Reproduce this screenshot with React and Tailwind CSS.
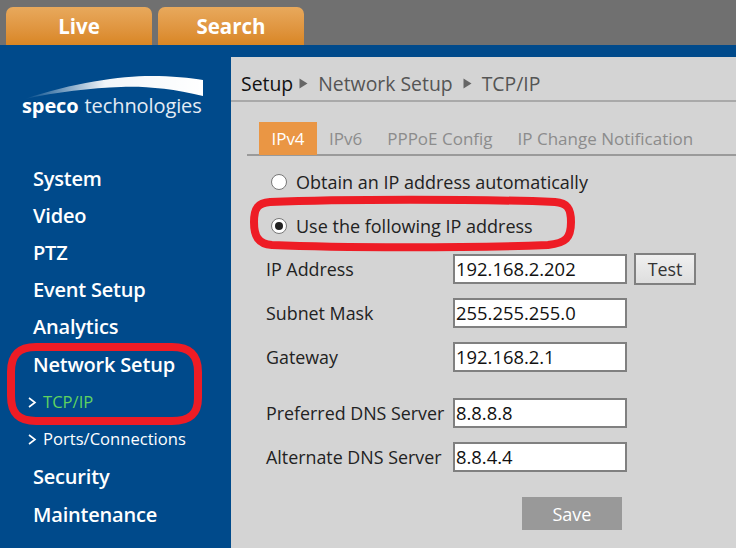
const FONT = { fontFamily: '"Open Sans","Noto Sans",sans-serif' };

const navTop = ["System", "Video", "PTZ", "Event Setup", "Analytics"];

function NavItem({ children, className = "" }) {
  return <div className={`h-[37.2px] flex items-center pl-[33px] text-[20px] font-semibold text-white tracking-[-0.2px] ${className}`}>{children}</div>;
}

function SubItem({ children, green, className = "" }) {
  return (
    <div className={`h-[37.6px] flex items-center pl-[28px] text-[16.6px] ${green ? "text-[#5fd35f]" : "text-white"} ${className}`}>
      <svg width="9" height="11" viewBox="0 0 9 11" className="mr-[6px]" fill="none">
        <path d="M1 1 L7 5.5 L1 10" stroke="white" strokeWidth="1.6" />
      </svg>
      {children}
    </div>
  );
}

function Field({ label, value, extra, className = "" }) {
  return (
    <div className={`flex items-center h-[30px] ${className}`}>
      <div className="w-[187px] text-[17.85px] text-[#222]">{label}</div>
      <div className="w-[174px] h-[30px] bg-white border-2 border-[#808080] pl-[1px] text-[18.4px] leading-[26px] text-[#111]">{value}</div>
      {extra}
    </div>
  );
}

function Radio({ checked }) {
  return (
    <span className="w-[16px] h-[16px] -ml-[1px] rounded-full bg-white border border-[#777] flex items-center justify-center mr-[9px] shrink-0">
      {checked && <span className="w-[8px] h-[8px] rounded-full bg-[#222]" />}
    </span>
  );
}

function Arrow({ className = "" }) {
  return (
    <svg width="9" height="11" viewBox="0 0 9 11" className={className}>
      <path d="M0.5 0.5 L8.5 5.5 L0.5 10.5 Z" fill="#666" />
    </svg>
  );
}

export default function App() {
  return (
    <div className="relative w-[736px] h-[548px] overflow-hidden flex flex-col bg-[#004a8b]" style={FONT}>
      <div className="h-[45px] bg-[#707070] flex items-end pl-[6px] gap-[6px] shrink-0">
        {["Live", "Search"].map((t) => (
          <div key={t} className="w-[146px] h-[38px] pt-[1px] rounded-t-[7px] bg-gradient-to-b from-[#e8a95c] to-[#d98623] flex items-center justify-center text-white font-bold text-[20.5px]">
            {t}
          </div>
        ))}
      </div>
      <div className="flex flex-1 min-h-0">
        <aside className="w-[231px] shrink-0">
          <div className="h-[115px] pl-[21px] pt-[30px]">
            <svg width="183" height="24" viewBox="0 0 183 24" className="block">
              <defs>
                <linearGradient id="arc" x1="0" x2="1" y1="0" y2="0">
                  <stop offset="0" stopColor="#fff" stopOpacity="0" />
                  <stop offset="0.45" stopColor="#fff" stopOpacity="0.95" />
                  <stop offset="1" stopColor="#fff" />
                </linearGradient>
              </defs>
              <path d="M4 24 C50 8 100 1 130 1 C150 1 170 3 182 5 L182 21 C150 13 120 11 100 12 C70 13 35 17 4 24 Z" fill="url(#arc)" />
            </svg>
            <div className="-mt-[4px] pl-[1px] flex items-baseline text-[20px] leading-[22px] text-white whitespace-nowrap tracking-[-0.1px]">
              <span className="font-bold">speco</span>
              <span className="ml-[6px] text-[#e4ecf5]">technologies</span>
            </div>
          </div>
          <div>
            {navTop.map((n) => <NavItem key={n}>{n}</NavItem>)}
            <NavItem>Network Setup</NavItem>
            <SubItem green className="pt-[2px]">TCP/IP</SubItem>
            <SubItem>Ports/Connections</SubItem>
            <NavItem>Security</NavItem>
            <NavItem className="mt-[1px]">Maintenance</NavItem>
          </div>
        </aside>
        <main className="flex-1 mt-[12px] bg-[#d4d4d4] min-w-0">
          <div className="h-[45px] pt-[10px] border-b-2 border-[#a9a9a9] flex items-center pl-[10px] text-[19.4px] text-[#555] whitespace-nowrap">
            <span className="text-[#111]">Setup</span>
            <Arrow className="ml-[6px] mr-[10px]" />
            <span>Network Setup</span>
            <Arrow className="mx-[10px]" />
            <span>TCP/IP</span>
          </div>
          <div className="ml-[16px] mt-[20px] h-[34px] pl-[12px] border-b-2 border-[#9a9a9a] flex text-[17px] text-[#8c8c8c] whitespace-nowrap">
            <div className="w-[58px] h-[33px] pt-[1px] bg-[#ea9644] text-white flex items-center justify-center">IPv4</div>
            <div className="ml-[12px] pt-[1px] flex items-center">IPv6</div>
            <div className="ml-[25px] pt-[1px] flex items-center">PPPoE Config</div>
            <div className="ml-[25px] pt-[1px] flex items-center">IP Change Notification</div>
          </div>
          <div className="pl-[35px] pt-[11px]">
            <div className="pl-[6px] flex items-center h-[30px] text-[18px] text-[#222]"><Radio />Obtain an IP address automatically</div>
            <div className="pl-[6px] mt-[14px] flex items-center h-[30px] text-[18px] text-[#222]"><Radio checked />Use the following IP address</div>
            <Field
              label="IP Address"
              value="192.168.2.202"
              className="mt-[13px]"
              extra={
                <div className="ml-[7px] w-[62px] h-[32px] bg-gradient-to-b from-[#f0f0f0] to-[#dedede] border-2 border-[#808080] flex items-center justify-center text-[17.85px] text-[#333]">Test</div>
              }
            />
            <Field label="Subnet Mask" value="255.255.255.0" className="mt-[14px]" />
            <Field label="Gateway" value="192.168.2.1" className="mt-[14px]" />
            <Field label="Preferred DNS Server" value="8.8.8.8" className="mt-[26px]" />
            <Field label="Alternate DNS Server" value="8.8.4.4" className="mt-[14px]" />
            <div className="ml-[256px] mt-[25px] w-[100px] h-[33px] pt-[1px] bg-[#999] text-white text-[18px] flex items-center justify-center">Save</div>
          </div>
        </main>
      </div>
      <svg className="absolute inset-0 pointer-events-none" width="736" height="548" fill="none" stroke="#ee1c25">
        <path strokeWidth="8" d="M36 347 H172 C190 347 198 355 198 372 V398 C198 414 190 421 172 421 H36 C18 421 11 413 11 396 V372 C11 355 18 347 36 347 Z" />
        <path strokeWidth="8" d="M270 202 C340 199 480 199 555 202 C567 203 571 208 571 222 C571 238 566 243 548 245 C470 248 340 248 272 245 C258 244 254 236 254 222 C254 208 258 203 270 202 Z" />
      </svg>
    </div>
  );
}
